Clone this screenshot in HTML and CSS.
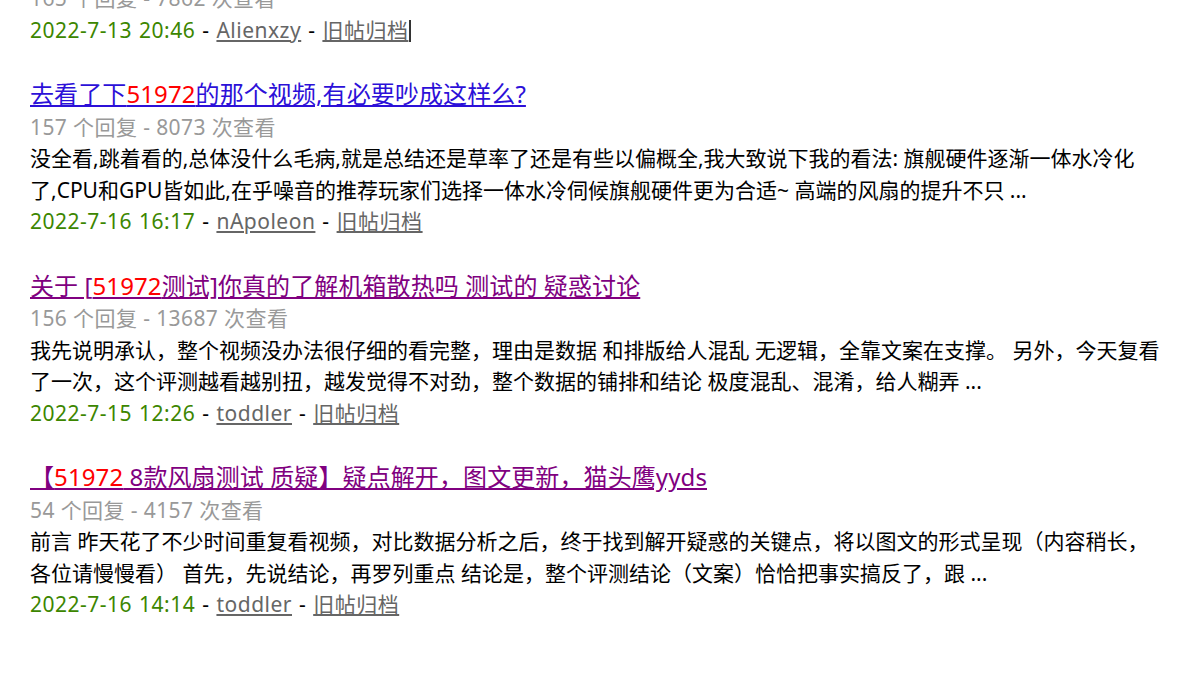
FILE: index.html
```html
<!DOCTYPE html>
<html lang="zh">
<head>
    <meta charset="UTF-8">
    <meta name="viewport" content="width=device-width, initial-scale=1.0">
    <title>51972 - 搜索结果</title>
    <link rel="stylesheet" href="styles.css">
</head>
<body>
    <div class="results">
        <!-- 上一条（只露出尾部） -->
        <div class="topic">
            <div class="meta">165 个回复 - 7862 次查看</div>
            <div class="info">
                <span class="date">2022-7-13 20:46</span> -
                <a class="user" href="#">Alienxzy</a> -
                <a class="archive" href="#">旧帖归档</a><span class="caret"></span>
            </div>
        </div>

        <div class="topic">
            <a class="title" href="#">去看了下<em>51972</em>的那个视频,有必要吵成这样么?</a>
            <div class="meta">157 个回复 - 8073 次查看</div>
            <div class="excerpt">没全看,跳着看的,总体没什么毛病,就是总结还是草率了还是有些以偏概全,我大致说下我的看法: 旗舰硬件逐渐一体水冷化了,CPU和GPU皆如此,在乎噪音的推荐玩家们选择一体水冷伺候旗舰硬件更为合适~ 高端的风扇的提升不只 ...</div>
            <div class="info">
                <span class="date">2022-7-16 16:17</span> -
                <a class="user" href="#">nApoleon</a> -
                <a class="archive" href="#">旧帖归档</a>
            </div>
        </div>

        <div class="topic">
            <a class="title visited" href="#">关于 [<em>51972</em>测试]你真的了解机箱散热吗 测试的 疑惑讨论</a>
            <div class="meta">156 个回复 - 13687 次查看</div>
            <div class="excerpt">我先说明承认，整个视频没办法很仔细的看完整，理由是数据 和排版给人混乱 无逻辑，全靠文案在支撑。 另外，今天复看了一次，这个评测越看越别扭，越发觉得不对劲，整个数据的铺排和结论 极度混乱、混淆，给人糊弄 ...</div>
            <div class="info">
                <span class="date">2022-7-15 12:26</span> -
                <a class="user" href="#">toddler</a> -
                <a class="archive" href="#">旧帖归档</a>
            </div>
        </div>

        <div class="topic">
            <a class="title visited" href="#">【<em>51972</em> 8款风扇测试 质疑】疑点解开，图文更新，猫头鹰yyds</a>
            <div class="meta">54 个回复 - 4157 次查看</div>
            <div class="excerpt">前言 昨天花了不少时间重复看视频，对比数据分析之后，终于找到解开疑惑的关键点，将以图文的形式呈现（内容稍长，各位请慢慢看） 首先，先说结论，再罗列重点 结论是，整个评测结论（文案）恰恰把事实搞反了，跟 ...</div>
            <div class="info">
                <span class="date">2022-7-16 14:14</span> -
                <a class="user" href="#">toddler</a> -
                <a class="archive" href="#">旧帖归档</a>
            </div>
        </div>
    </div>
</body>
</html>
```

FILE: styles.css
```css
/* 整体页面 */
body {
    margin: 0;
    background-color: #fff;
    color: #000;
    font-family: "Noto Sans", "Noto Sans CJK SC", sans-serif;
    font-size: 21px;
    line-height: 31.5px;
}

.results {
    margin-top: -17px;
    padding: 0 24px 0 30px;
}

/* 每条帖子 */
.topic {
    margin-bottom: 33px;
}

.title {
    display: inline-block;
    font-size: 24px;
    line-height: 30px;
    margin: 0 0 2px;
    letter-spacing: 0.1px;
    color: #2c10d8;
    text-decoration: underline;
}

.title.visited {
    color: #800080;
}

.title em {
    font-style: normal;
    color: #ff0000;
}

.meta {
    color: #999;
    letter-spacing: 0.4px;
}

.excerpt {
    color: #000;
}

/* 日期 / 作者 / 归档 */
.info {
    letter-spacing: 0.5px;
    word-spacing: 1px;
}

.date {
    color: #3c8600;
}

.user, .archive {
    color: #666;
    text-decoration: underline;
}

/* 光标 */
.caret {
    display: inline-block;
    width: 2px;
    height: 22px;
    margin-left: 1px;
    vertical-align: -4px;
    background-color: #333;
}
```
